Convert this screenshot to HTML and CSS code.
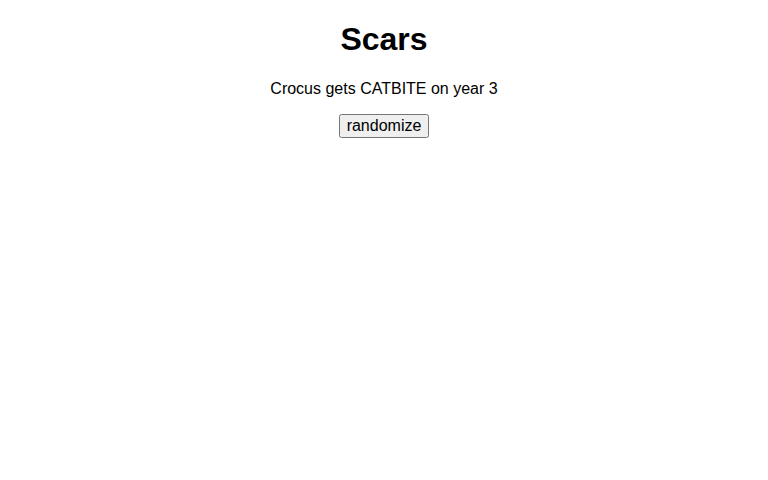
FILE: index.html
```html
<!DOCTYPE html>
<html lang="en">
<head>
    <meta charset="UTF-8">
    <meta name="viewport" content="width=device-width, initial-scale=1.0">
    <title>Scars</title>
    <link rel="stylesheet" href="styles.css">
</head>
<body>

<h1>Scars</h1>

<!-- Resultado del sorteo -->
<p id="result">Crocus gets CATBITE on year 3</p>

<button class="randomize-button" id="randomizeBtn">randomize</button>

</body>
</html>
```
FILE: styles.css
```css
body {
    font-family: "Liberation Sans", Arial, sans-serif;
    text-align: center;
    margin: 0 8px;
}
h1 {
    font-size: 32px;
}
.randomize-button {
    font-family: "Liberation Sans", Arial, sans-serif;
    font-size: 16px;
}
```
